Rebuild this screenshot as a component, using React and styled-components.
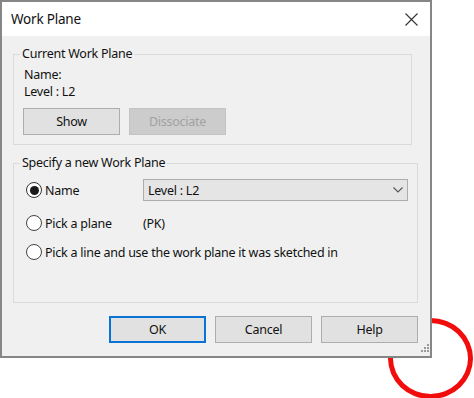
import React from "react";
import styled, { createGlobalStyle } from "styled-components";

const Global = createGlobalStyle`
  html, body { margin: 0; padding: 0; background: #ffffff; }
  body { width: 474px; height: 398px; overflow: hidden; position: relative;
    font-family: "Noto Sans", "Open Sans", sans-serif; color: #111111; }
  * { box-sizing: border-box; }
`;

const Page = styled.div`
  position: relative;
  width: 474px;
  height: 398px;
`;

const Annotation = styled.div`
  position: absolute;
  left: 388px;
  top: 318px;
  width: 85px;
  height: 81px;
  border: 5px solid #f20d0d;
  border-radius: 50%;
  z-index: 0;
`;

const Dialog = styled.div`
  position: relative;
  z-index: 1;
  width: 432px;
  height: 358px;
  border: 2px solid #868686;
  background: #f0f0f0;
  display: flex;
  flex-direction: column;
`;

const TitleBar = styled.div`
  height: 34px;
  background: #ffffff;
  display: flex;
  align-items: center;
  justify-content: space-between;
  padding: 0 12px 0 9px;
`;

const Title = styled.span`
  font-size: 13.5px;
  color: #111111;
  letter-spacing: -0.2px;
`;

const Close = styled.svg`
  width: 13px;
  height: 13px;
`;

const Body = styled.div`
  flex: 1;
  position: relative;
  padding: 10px 12px 0 11px;
  display: flex;
  flex-direction: column;
  font-size: 12.5px;
  letter-spacing: -0.25px;
`;

const Group = styled.fieldset`
  margin: 0;
  min-width: 0;
  width: ${(p) => p.$w}px;
  border: 1px solid #dadada;
  padding: ${(p) => p.$pad};
  & + & { margin-top: 10px; }
`;

const Legend = styled.legend`
  line-height: 16px;
  padding: 0 2px;
  margin-left: ${(p) => p.$ml}px;
`;

const InfoLine = styled.div`
  line-height: 17px;
  padding-left: 1px;
`;

const ButtonRow = styled.div`
  display: flex;
  gap: ${(p) => p.$gap}px;
  margin-top: ${(p) => p.$mt || 0}px;
  justify-content: ${(p) => p.$justify || "flex-start"};
`;

const Button = styled.div`
  width: ${(p) => p.$w || 97}px;
  height: 27px;
  display: flex;
  align-items: center;
  justify-content: center;
  background: ${(p) => (p.$disabled ? "#cccccc" : "#e1e1e1")};
  color: ${(p) => (p.$disabled ? "#a2a2a2" : "#111111")};
  border: ${(p) =>
    p.$default ? "2px solid #0a74d6" : p.$disabled ? "1px solid #c3c3c3" : "1px solid #adadad"};
`;

const OptionRow = styled.div`
  display: flex;
  align-items: center;
  height: 22px;
  margin-top: ${(p) => p.$mt}px;
`;

const RadioLabel = styled.label`
  display: flex;
  align-items: center;
  gap: 3px;
  width: ${(p) => (p.$w ? `${p.$w}px` : "auto")};
  flex-shrink: 0;
`;

const Radio = styled.span`
  width: 16px;
  height: 16px;
  border-radius: 50%;
  border: 1px solid ${(p) => (p.$on ? "#333333" : "#444444")};
  background: #ffffff;
  display: flex;
  align-items: center;
  justify-content: center;
  &::after {
    content: "";
    width: 9px;
    height: 9px;
    border-radius: 50%;
    background: #1a1a1a;
    display: ${(p) => (p.$on ? "block" : "none")};
  }
`;

const Select = styled.div`
  flex: 1;
  height: 22px;
  background: #e5e5e5;
  border: 1px solid #adadad;
  display: flex;
  align-items: center;
  justify-content: space-between;
  padding: 0 3px 0 4px;
`;

const Chevron = styled.svg`
  width: 12px;
  height: 8px;
`;

const Hint = styled.span``;

const Grip = styled.svg`
  position: absolute;
  right: 1px;
  bottom: 3px;
  width: 9px;
  height: 9px;
`;

export default function App() {
  return (
    <Page>
      <Global />
      <Annotation />
      <Dialog>
        <TitleBar>
          <Title>Work Plane</Title>
          <Close viewBox="0 0 13 13">
            <path d="M0.5 0.5 L12.5 12.5 M12.5 0.5 L0.5 12.5" stroke="#333" strokeWidth="1.1" fill="none" />
          </Close>
        </TitleBar>
        <Body>
          <Group $w={399} $pad="4px 9px 9px 9px">
            <Legend $ml={-3}>Current Work Plane</Legend>
            <InfoLine>Name:</InfoLine>
            <InfoLine>Level : L2</InfoLine>
            <ButtonRow $gap={9} $mt={8}>
              <Button $w={97}>Show</Button>
              <Button $w={97} $disabled>Dissociate</Button>
            </ButtonRow>
          </Group>
          <Group $w={405} $pad="8px 9px 39px 12px">
            <Legend $ml={-6}>Specify a new Work Plane</Legend>
            <OptionRow $mt={0}>
              <RadioLabel $w={117}>
                <Radio $on />
                Name
              </RadioLabel>
              <Select>
                <span>Level : L2</span>
                <Chevron viewBox="0 0 12 8">
                  <path d="M1.5 1.5 L6 6 L10.5 1.5" stroke="#555" strokeWidth="1.1" fill="none" />
                </Chevron>
              </Select>
            </OptionRow>
            <OptionRow $mt={11}>
              <RadioLabel $w={117}>
                <Radio />
                Pick a plane
              </RadioLabel>
              <Hint>(PK)</Hint>
            </OptionRow>
            <OptionRow $mt={7}>
              <RadioLabel>
                <Radio />
                Pick a line and use the work plane it was sketched in
              </RadioLabel>
            </OptionRow>
          </Group>
          <ButtonRow $gap={9} $mt={13} $justify="flex-end">
            <Button $w={97} $default>OK</Button>
            <Button $w={97}>Cancel</Button>
            <Button $w={97}>Help</Button>
          </ButtonRow>
          <Grip viewBox="0 0 9 9">
            <g fill="#9a9a9a">
              <rect x="7" y="0" width="2" height="2" />
              <rect x="4" y="3" width="2" height="2" />
              <rect x="7" y="3" width="2" height="2" />
              <rect x="1" y="6" width="2" height="2" />
              <rect x="4" y="6" width="2" height="2" />
              <rect x="7" y="6" width="2" height="2" />
            </g>
          </Grip>
        </Body>
      </Dialog>
    </Page>
  );
}
